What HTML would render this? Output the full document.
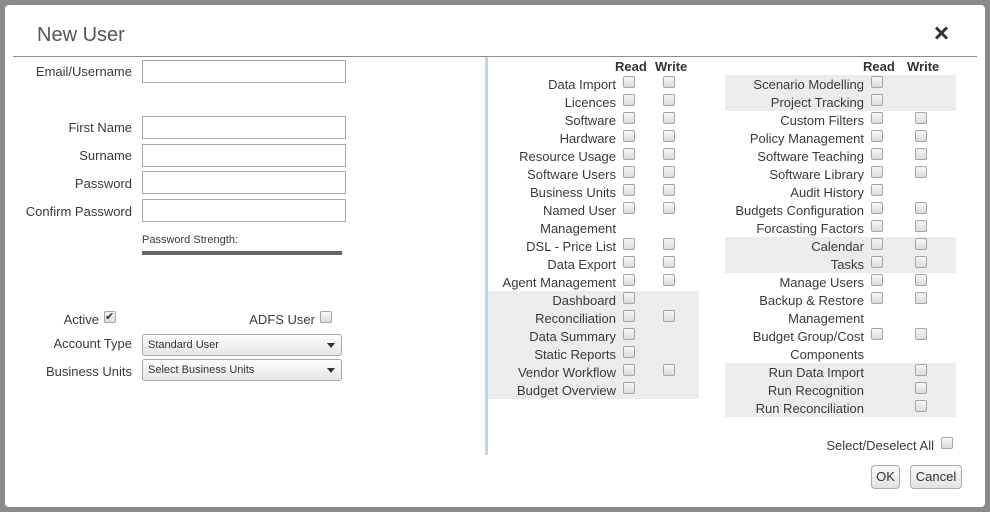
<!DOCTYPE html>
<html><head><meta charset="utf-8">
<style>
html,body{margin:0;padding:0;width:990px;height:512px;overflow:hidden;background:#8a8a8a;}
*{box-sizing:border-box;}
#dlg{position:absolute;left:5px;top:5px;width:980px;height:502px;background:#fff;border-radius:4px;}
.a{position:absolute;font-family:"Liberation Sans",Arial,sans-serif;font-size:13px;color:#3a3a3a;white-space:nowrap;line-height:18px;margin-top:1px;}
.cb{position:absolute;width:12px;height:12px;border:1px solid #a6a6a6;border-radius:2px;background:linear-gradient(#f6f6f6,#dcdcdc);}
.in{position:absolute;border:1px solid #a9a9a9;background:#fff;height:23px;width:204px;left:142px;}
.sel{position:absolute;left:142px;width:200px;border:1px solid #aaa;border-radius:3px;background:linear-gradient(#fdfdfd,#e6e6e6);font-family:"Liberation Sans",Arial,sans-serif;font-size:11px;color:#333;padding-left:5px;}
.sel:after{content:"";position:absolute;right:6px;top:8px;border-left:4px solid transparent;border-right:4px solid transparent;border-top:5px solid #333;}
.band{position:absolute;background:#ececec;}
.btn{position:absolute;top:465px;height:24px;border:1px solid #aaa;border-radius:4px;background:linear-gradient(#fafafa,#e2e2e2);font-family:"Liberation Sans",Arial,sans-serif;font-size:13px;color:#333;text-align:center;line-height:22px;}
</style></head><body>
<div id="dlg"></div>
<div class="a" style="left:37px;top:22px;font-size:20px;line-height:24px;color:#555;">New User</div>
<svg style="position:absolute;left:934px;top:26px" width="15" height="14" viewBox="0 0 15 14"><path d="M2 1.5L13 12.5M13 1.5L2 12.5" stroke="#333" stroke-width="3"/></svg>
<div style="position:absolute;left:13px;top:56px;width:964px;height:1px;background:#8c8c8c"></div>
<div style="position:absolute;left:485px;top:57px;width:3px;height:398px;background:#bcd8ef"></div>

<div class="a" style="right:858px;top:62px">Email/Username</div><div class="in" style="top:60px"></div>
<div class="a" style="right:858px;top:118px">First Name</div><div class="in" style="top:116px"></div>
<div class="a" style="right:858px;top:146px">Surname</div><div class="in" style="top:144px"></div>
<div class="a" style="right:858px;top:174px">Password</div><div class="in" style="top:171px"></div>
<div class="a" style="right:858px;top:202px">Confirm Password</div><div class="in" style="top:199px"></div>
<div class="a" style="left:142px;top:230px;font-size:11px">Password Strength:</div>
<div style="position:absolute;left:142px;top:251px;width:200px;height:4px;background:#666"></div>

<div class="a" style="right:891px;top:310px">Active</div>
<div class="cb" style="left:104px;top:311px"></div><div class="a" style="left:105px;top:307px;font-size:11px;color:#333">✔</div>
<div class="a" style="right:675px;top:310px">ADFS User</div><div class="cb" style="left:320px;top:311px"></div>
<div class="a" style="right:858px;top:334px">Account Type</div><div class="sel" style="top:334px;height:22px;line-height:20px">Standard User</div>
<div class="a" style="right:858px;top:362px">Business Units</div><div class="sel" style="top:359px;height:22px;line-height:20px">Select Business Units</div>

<div class="band" style="left:488px;top:291px;width:211px;height:108px"></div>
<div class="band" style="left:725px;top:75px;width:231px;height:36px"></div>
<div class="band" style="left:725px;top:237px;width:231px;height:36px"></div>
<div class="band" style="left:725px;top:363px;width:231px;height:54px"></div>

<div class="a" style="left:615px;top:57px;font-weight:bold;color:#333">Read</div>
<div class="a" style="left:655px;top:57px;font-weight:bold;color:#333">Write</div>
<div class="a" style="left:863px;top:57px;font-weight:bold;color:#333">Read</div>
<div class="a" style="left:907px;top:57px;font-weight:bold;color:#333">Write</div>

<div id="L"></div>
<script>
var L=[["Data Import",1,1],["Licences",1,1],["Software",1,1],["Hardware",1,1],["Resource Usage",1,1],["Software Users",1,1],["Business Units",1,1],["Named User",1,1],["Management",0,0],["DSL - Price List",1,1],["Data Export",1,1],["Agent Management",1,1],["Dashboard",1,0],["Reconciliation",1,1],["Data Summary",1,0],["Static Reports",1,0],["Vendor Workflow",1,1],["Budget Overview",1,0]];
var R=[["Scenario Modelling",1,0],["Project Tracking",1,0],["Custom Filters",1,1],["Policy Management",1,1],["Software Teaching",1,1],["Software Library",1,1],["Audit History",1,0],["Budgets Configuration",1,1],["Forcasting Factors",1,1],["Calendar",1,1],["Tasks",1,1],["Manage Users",1,1],["Backup &amp; Restore",1,1],["Management",0,0],["Budget Group/Cost",1,1],["Components",0,0],["Run Data Import",0,1],["Run Recognition",0,1],["Run Reconciliation",0,1]];
var h="";
function add(list,right,rx,wx){list.forEach(function(r,i){var t=75+18*i;h+='<div class="a" style="right:'+right+'px;top:'+t+'px">'+r[0]+'</div>';if(r[1])h+='<div class="cb" style="left:'+rx+'px;top:'+(t+1)+'px"></div>';if(r[2])h+='<div class="cb" style="left:'+wx+'px;top:'+(t+1)+'px"></div>';});}
add(L,374,623,663);add(R,126,871,915);
document.getElementById("L").innerHTML=h;
</script>

<div class="a" style="right:56px;top:436px">Select/Deselect All</div><div class="cb" style="left:941px;top:437px"></div>
<div class="btn" style="left:871px;width:29px">OK</div>
<div class="btn" style="left:910px;width:52px">Cancel</div>
</body></html>
